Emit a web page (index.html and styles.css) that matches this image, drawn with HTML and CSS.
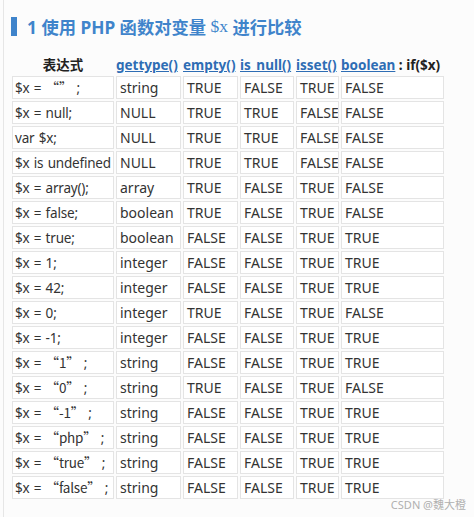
FILE: index.html
```html
<!DOCTYPE html>
<html lang="zh">
<head>
<meta charset="utf-8">
<link rel="stylesheet" href="styles.css">
</head>
<body>
<div class="page">
  <h2 class="title"><span class="bar"></span>1 使用 PHP 函数对变量 <span class="var">$x</span> 进行比较</h2>
  <table class="cmp">
    <colgroup>
      <col class="c1"><col class="c2"><col class="c3"><col class="c4"><col class="c5"><col class="c6">
    </colgroup>
    <thead>
      <tr>
        <th class="center">表达式</th>
        <th><a href="#">gettype()</a></th>
        <th><a href="#">empty()</a></th>
        <th><a href="#">is_null()</a></th>
        <th><a href="#">isset()</a></th>
        <th><a href="#">boolean</a> : if($x)</th>
      </tr>
    </thead>
    <tbody>
      <tr><td class="expr">$x = <span class="q">“”</span> ;</td><td>string</td><td>TRUE</td><td>FALSE</td><td>TRUE</td><td>FALSE</td></tr>
      <tr><td class="expr">$x = null;</td><td>NULL</td><td>TRUE</td><td>TRUE</td><td>FALSE</td><td>FALSE</td></tr>
      <tr><td class="expr">var $x;</td><td>NULL</td><td>TRUE</td><td>TRUE</td><td>FALSE</td><td>FALSE</td></tr>
      <tr><td class="expr">$x is undefined</td><td>NULL</td><td>TRUE</td><td>TRUE</td><td>FALSE</td><td>FALSE</td></tr>
      <tr><td class="expr">$x = array();</td><td>array</td><td>TRUE</td><td>FALSE</td><td>TRUE</td><td>FALSE</td></tr>
      <tr><td class="expr">$x = false;</td><td>boolean</td><td>TRUE</td><td>FALSE</td><td>TRUE</td><td>FALSE</td></tr>
      <tr><td class="expr">$x = true;</td><td>boolean</td><td>FALSE</td><td>FALSE</td><td>TRUE</td><td>TRUE</td></tr>
      <tr><td class="expr">$x = 1;</td><td>integer</td><td>FALSE</td><td>FALSE</td><td>TRUE</td><td>TRUE</td></tr>
      <tr><td class="expr">$x = 42;</td><td>integer</td><td>FALSE</td><td>FALSE</td><td>TRUE</td><td>TRUE</td></tr>
      <tr><td class="expr">$x = 0;</td><td>integer</td><td>TRUE</td><td>FALSE</td><td>TRUE</td><td>FALSE</td></tr>
      <tr><td class="expr">$x = -1;</td><td>integer</td><td>FALSE</td><td>FALSE</td><td>TRUE</td><td>TRUE</td></tr>
      <tr><td class="expr">$x = <span class="q">“1”</span> ;</td><td>string</td><td>FALSE</td><td>FALSE</td><td>TRUE</td><td>TRUE</td></tr>
      <tr><td class="expr">$x = <span class="q">“0”</span> ;</td><td>string</td><td>TRUE</td><td>FALSE</td><td>TRUE</td><td>FALSE</td></tr>
      <tr><td class="expr">$x = <span class="q">“-1”</span> ;</td><td>string</td><td>FALSE</td><td>FALSE</td><td>TRUE</td><td>TRUE</td></tr>
      <tr><td class="expr">$x = <span class="q">“php”</span> ;</td><td>string</td><td>FALSE</td><td>FALSE</td><td>TRUE</td><td>TRUE</td></tr>
      <tr><td class="expr">$x = <span class="q">“true”</span> ;</td><td>string</td><td>FALSE</td><td>FALSE</td><td>TRUE</td><td>TRUE</td></tr>
      <tr><td class="expr">$x = <span class="q">“false”</span> ;</td><td>string</td><td>FALSE</td><td>FALSE</td><td>TRUE</td><td>TRUE</td></tr>
    </tbody>
  </table>
  <div class="mark">CSDN @魏大橙</div>
</div>
</body>
</html>
```

FILE: styles.css
```css
html, body {
  margin: 0;
  padding: 0;
  background: #fcfcfc;
}
body {
  font-family: "Noto Sans", "Noto Sans CJK SC", sans-serif;
  color: #333;
}
.page {
  margin-left: 3px;
  border-left: 1px solid #e6e6e6;
  height: 517px;
  box-sizing: border-box;
  padding: 15px 0 0 6px;
  position: relative;
}
.title {
  margin: 0;
  display: flex;
  align-items: center;
  height: 22px;
  font-family: "Noto Sans", "Noto Sans CJK SC", sans-serif;
  font-size: 17.3px;
  font-weight: bold;
  color: #3f84cb;
  white-space: pre;
}
.bar {
  display: inline-block;
  width: 6px;
  height: 19px;
  background: #3f84cb;
  margin-left: 1px;
  margin-right: 10px;
}
.var {
  font-family: "Liberation Serif", serif;
  font-weight: normal;
  font-size: 17.5px;
}
.cmp {
  margin-top: 17px;
  border-collapse: separate;
  border-spacing: 2px;
  table-layout: fixed;
  width: 436px;
  font-size: 14px;
}
.c1 { width: 102px; }
.c2 { width: 65px; }
.c3 { width: 55px; }
.c4 { width: 54px; }
.c5 { width: 43px; }
.c6 { width: 103px; }
.cmp th {
  font-weight: bold;
  font-size: 13.5px;
  text-align: left;
  padding: 0;
  height: 18px;
  line-height: 18px;
  white-space: nowrap;
  color: #222;
  overflow: visible;
}
.cmp th.center { text-align: center; }
.cmp th a {
  color: #2e6db4;
  text-decoration: underline;
}
.cmp td {
  box-sizing: border-box;
  border: 1px solid #e4e4e4;
  height: 23px;
  line-height: 20px;
  padding: 0 3px;
  white-space: nowrap;
  overflow: hidden;
  background: #fff;
}
.cmp td.expr {
  font-size: 13.5px;
  letter-spacing: -0.2px;
  word-spacing: 1px;
  padding: 0 1px 0 2px;
}
.q {
  font-family: "Noto Sans CJK SC", sans-serif;
  line-height: 0;
}
.mark {
  position: absolute;
  right: 8px;
  bottom: 5px;
  font-size: 11px;
  color: #b0b0b0;
}
```
